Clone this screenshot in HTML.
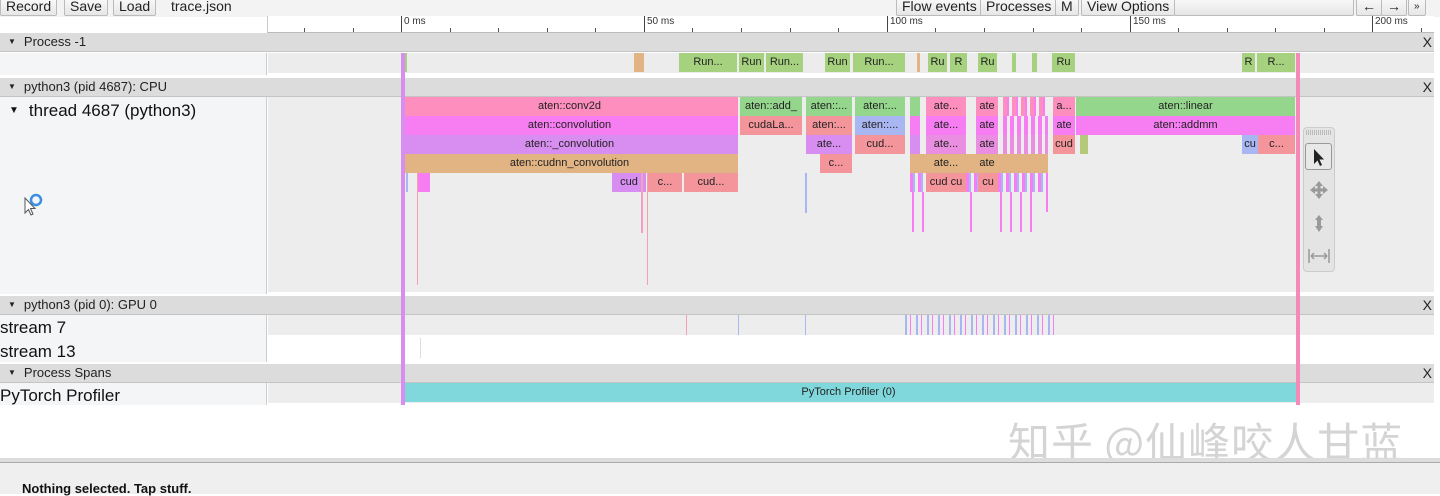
<!DOCTYPE html>
<html><head><meta charset="utf-8"><style>
*{margin:0;padding:0;box-sizing:border-box}
body{width:1440px;height:494px;position:relative;overflow:hidden;background:#fff;font-family:"Liberation Sans","Noto Sans CJK SC",sans-serif}
.a{position:absolute}
.btn{position:absolute;top:-3px;height:19px;border:1px solid #bbb;background:linear-gradient(#fafafa,#e6e6e6);font-size:14px;line-height:17px;padding:0 5px;color:#222;border-radius:2px}
.hd{position:absolute;left:0;width:1434px;height:19px;background:#dcdcdc;border-bottom:1px solid #c4c4c4;font-size:13px;line-height:18px;color:#222;padding-left:8px}
.hd i{font-style:normal;font-size:8px;vertical-align:2px;margin-right:8px}
.hd .x{position:absolute;right:2px;top:0;font-size:14px}
.lp{position:absolute;left:0;width:267px;background:#f4f5f6;border-right:1px solid #ccc}
.b{position:absolute;height:19px;font-size:11px;text-align:center;line-height:19px;overflow:hidden;color:#222;white-space:nowrap}
.v{position:absolute;width:2px}
.tk{position:absolute;top:28px;width:1px;height:4px;background:#555}
.tl{position:absolute;top:16px;height:16px;border-left:1px solid #444;font-size:10px;line-height:12px;padding-left:2px;color:#333}
</style></head><body>
<div class="a" style="left:0;top:0;width:1440px;height:17px;background:#f3f3f3"></div>
<div class="btn" style="left:0">Record</div>
<div class="btn" style="left:64px">Save</div>
<div class="btn" style="left:113px">Load</div>
<div class="a" style="left:171px;top:-2px;font-size:14px;color:#222">trace.json</div>
<div class="btn" style="left:896px">Flow events</div>
<div class="btn" style="left:980px">Processes</div>
<div class="btn" style="left:1055px">M</div>
<div class="btn" style="left:1081px">View Options</div>
<div class="btn" style="left:1174px;width:180px"></div>
<div class="btn" style="left:1356px">←</div>
<div class="btn" style="left:1381px">→</div>
<div class="btn" style="left:1408px;font-size:10px">»</div>
<div class="a" style="left:267px;top:16px;width:1167px;height:17px;background:#fff;border-left:1px solid #ccc;border-bottom:1px solid #bbb"></div>
<div class="tl" style="left:401px">0 ms</div><div class="tl" style="left:644px">50 ms</div><div class="tl" style="left:887px">100 ms</div><div class="tl" style="left:1130px">150 ms</div><div class="tl" style="left:1372px">200 ms</div>
<div class="tk" style="left:304px"></div><div class="tk" style="left:353px"></div><div class="tk" style="left:450px"></div><div class="tk" style="left:498px"></div><div class="tk" style="left:547px"></div><div class="tk" style="left:595px"></div><div class="tk" style="left:692px"></div><div class="tk" style="left:741px"></div><div class="tk" style="left:790px"></div><div class="tk" style="left:838px"></div><div class="tk" style="left:935px"></div><div class="tk" style="left:984px"></div><div class="tk" style="left:1033px"></div><div class="tk" style="left:1081px"></div><div class="tk" style="left:1178px"></div><div class="tk" style="left:1227px"></div><div class="tk" style="left:1275px"></div><div class="tk" style="left:1324px"></div><div class="tk" style="left:1421px"></div>
<div class="hd" style="top:33px"><i>▼</i>Process -1<span class="x">X</span></div>
<div class="lp" style="top:53px;height:22px"></div>
<div class="a" style="left:268px;top:53px;width:1166px;height:20px;background:#ececec"></div>
<div class="b" style="left:403px;top:53px;width:4px;background:#a6d27f"></div>
<div class="b" style="left:634px;top:53px;width:10px;background:#e2b383"></div>
<div class="b" style="left:679px;top:53px;width:58px;background:#a6d27f">Run...</div>
<div class="b" style="left:739px;top:53px;width:25px;background:#a6d27f">Run</div>
<div class="b" style="left:766px;top:53px;width:37px;background:#a6d27f">Run...</div>
<div class="b" style="left:825px;top:53px;width:25px;background:#a6d27f">Run</div>
<div class="b" style="left:853px;top:53px;width:52px;background:#a6d27f">Run...</div>
<div class="b" style="left:917px;top:53px;width:3px;background:#e2b383"></div>
<div class="b" style="left:928px;top:53px;width:19px;background:#a6d27f">Ru</div>
<div class="b" style="left:950px;top:53px;width:17px;background:#a6d27f">R</div>
<div class="b" style="left:978px;top:53px;width:19px;background:#a6d27f">Ru</div>
<div class="b" style="left:1012px;top:53px;width:4px;background:#a6d27f"></div>
<div class="b" style="left:1032px;top:53px;width:5px;background:#a6d27f"></div>
<div class="b" style="left:1052px;top:53px;width:23px;background:#a6d27f">Ru</div>
<div class="b" style="left:1242px;top:53px;width:13px;background:#a6d27f">R</div>
<div class="b" style="left:1257px;top:53px;width:38px;background:#a6d27f">R...</div>
<div class="hd" style="top:78px"><i>▼</i>python3 (pid 4687): CPU<span class="x">X</span></div>
<div class="lp" style="top:97px;height:197px"></div>
<div class="a" style="left:9px;top:101px;font-size:17px;color:#111"><span style="font-size:10px;vertical-align:3px;margin-right:10px">▼</span>thread 4687 (python3)</div>
<svg class="a" style="left:22px;top:192px" width="24" height="24"><circle cx="14" cy="8" r="5" fill="none" stroke="#3a8fe0" stroke-width="2.5"/><path d="M3 6 L3 21 L6.5 17.5 L9 23 L11 22 L8.5 16.5 L13 16.5 Z" fill="#fff" stroke="#555" stroke-width="1"/></svg>
<div class="a" style="left:268px;top:97px;width:1166px;height:195px;background:#ededed"></div>
<div class="b" style="left:401px;top:97px;width:337px;background:#fd8ebd">aten::conv2d</div>
<div class="b" style="left:740px;top:97px;width:62px;background:#95d68d">aten::add_</div>
<div class="b" style="left:806px;top:97px;width:46px;background:#95d68d">aten::...</div>
<div class="b" style="left:855px;top:97px;width:50px;background:#95d68d">aten:...</div>
<div class="b" style="left:910px;top:97px;width:10px;background:#95d68d"></div>
<div class="b" style="left:926px;top:97px;width:40px;background:#fd8ebd">ate...</div>
<div class="b" style="left:976px;top:97px;width:22px;background:#fd8ebd">ate</div>
<div class="b" style="left:1003px;top:97px;width:45px;background:repeating-linear-gradient(90deg,#fd8ebd 0 4px,#f77df2 4px 6px,#ededed 6px 9px)"></div>
<div class="b" style="left:1053px;top:97px;width:22px;background:#fd8ebd">a...</div>
<div class="b" style="left:1076px;top:97px;width:219px;background:#95d68d">aten::linear</div>
<div class="b" style="left:401px;top:116px;width:337px;background:#f77df2">aten::convolution</div>
<div class="b" style="left:740px;top:116px;width:62px;background:#f4959b">cudaLa...</div>
<div class="b" style="left:806px;top:116px;width:46px;background:#f4959b">aten:...</div>
<div class="b" style="left:855px;top:116px;width:50px;background:#a8b6f2">aten::...</div>
<div class="b" style="left:910px;top:116px;width:10px;background:#f77df2"></div>
<div class="b" style="left:926px;top:116px;width:40px;background:#f77df2">ate...</div>
<div class="b" style="left:976px;top:116px;width:22px;background:#f77df2">ate</div>
<div class="b" style="left:1003px;top:116px;width:45px;background:repeating-linear-gradient(90deg,#f77df2 0 4px,#ededed 4px 7px)"></div>
<div class="b" style="left:1053px;top:116px;width:22px;background:#f77df2">ate</div>
<div class="b" style="left:1076px;top:116px;width:219px;background:#f77df2">aten::addmm</div>
<div class="b" style="left:401px;top:135px;width:337px;background:#d88ef0">aten::_convolution</div>
<div class="b" style="left:806px;top:135px;width:46px;background:#d88ef0">ate...</div>
<div class="b" style="left:855px;top:135px;width:50px;background:#f4959b">cud...</div>
<div class="b" style="left:910px;top:135px;width:10px;background:#d88ef0"></div>
<div class="b" style="left:926px;top:135px;width:40px;background:#e98ee0">ate...</div>
<div class="b" style="left:976px;top:135px;width:22px;background:#e98ee0">ate</div>
<div class="b" style="left:1003px;top:135px;width:45px;background:repeating-linear-gradient(90deg,#e98ee0 0 4px,#ededed 4px 7px)"></div>
<div class="b" style="left:1053px;top:135px;width:22px;background:#f4959b">cud</div>
<div class="b" style="left:1080px;top:135px;width:8px;background:#b6c97a"></div>
<div class="b" style="left:1242px;top:135px;width:16px;background:#a8b6f2">cu</div>
<div class="b" style="left:1258px;top:135px;width:37px;background:#f4959b">c...</div>
<div class="b" style="left:401px;top:154px;width:337px;background:#e2b383">aten::cudnn_convolution</div>
<div class="b" style="left:820px;top:154px;width:32px;background:#f4959b">c...</div>
<div class="b" style="left:910px;top:154px;width:138px;background:#e2b383"></div>
<div class="b" style="left:926px;top:154px;width:40px;background:#e2b383">ate...</div>
<div class="b" style="left:976px;top:154px;width:22px;background:#e2b383">ate</div>
<div class="b" style="left:406px;top:173px;width:2px;background:#a8b6f2"></div>
<div class="b" style="left:418px;top:173px;width:12px;background:#f77df2"></div>
<div class="b" style="left:612px;top:173px;width:34px;background:#d88ef0">cud</div>
<div class="b" style="left:648px;top:173px;width:34px;background:#f4959b">c...</div>
<div class="b" style="left:684px;top:173px;width:54px;background:#f4959b">cud...</div>
<div class="b" style="left:910px;top:173px;width:138px;background:repeating-linear-gradient(90deg,#f77df2 0 3px,#a8b6f2 3px 5px,#ededed 5px 8px)"></div>
<div class="b" style="left:926px;top:173px;width:40px;background:#f4959b">cud cu</div>
<div class="b" style="left:978px;top:173px;width:20px;background:#f4959b">cu</div>
<div class="v" style="left:805px;top:173px;height:40px;background:#a8b6f2"></div>
<div class="v" style="left:641px;top:173px;height:60px;background:#f0a0c0"></div>
<div class="v" style="left:647px;top:173px;height:112px;width:1px;background:#f4a0b0"></div>
<div class="v" style="left:417px;top:173px;height:112px;width:1px;background:#f4a0b0"></div>
<div class="v" style="left:912px;top:192px;height:40px;background:#f77df2"></div>
<div class="v" style="left:922px;top:192px;height:40px;background:#f77df2"></div>
<div class="v" style="left:970px;top:192px;height:40px;background:#f77df2"></div>
<div class="v" style="left:1000px;top:192px;height:40px;background:#f77df2"></div>
<div class="v" style="left:1010px;top:192px;height:40px;background:#f77df2"></div>
<div class="v" style="left:1020px;top:192px;height:40px;background:#f77df2"></div>
<div class="v" style="left:1030px;top:192px;height:40px;background:#f77df2"></div>
<div class="v" style="left:1046px;top:192px;height:20px;background:#f77df2"></div>
<div class="a" style="left:1303px;top:127px;width:32px;height:145px;background:#e4e4e4;border:1px solid #ccc;border-radius:4px"></div>
<div class="a" style="left:1306px;top:130px;width:26px;height:5px;background:repeating-linear-gradient(90deg,#bbb 0 1px,transparent 1px 2px)"></div>
<div class="a" style="left:1305px;top:143px;width:27px;height:27px;border:1px solid #999;border-radius:3px;background:#e8e8e8"></div>
<svg class="a" style="left:1305px;top:143px" width="28" height="125"><path d="M9 6 L9 21 L12.5 17.5 L15 23 L17 22 L14.5 16.5 L19 16.5 Z" fill="#222"/><path d="M14 38 L18 43 L15.5 43 L15.5 45.5 L18 45.5 L18 43 L23 47 L18 51 L18 48.5 L15.5 48.5 L15.5 51 L18 51 L14 56 L10 51 L12.5 51 L12.5 48.5 L10 48.5 L10 51 L5 47 L10 43 L10 45.5 L12.5 45.5 L12.5 43 L10 43 Z" fill="#9a9a9a"/><path d="M14 72 L18 77 L16 77 L16 83 L18 83 L14 89 L10 83 L12 83 L12 77 L10 77 Z" fill="#9a9a9a"/><path d="M4 106 L4 120 M24 106 L24 120 M6 113 L22 113 M6 113 L9 110 M6 113 L9 116 M22 113 L19 110 M22 113 L19 116" stroke="#9a9a9a" stroke-width="1.5" fill="none"/></svg>
<div class="hd" style="top:296px"><i>▼</i>python3 (pid 0): GPU 0<span class="x">X</span></div>
<div class="lp" style="top:315px;height:47px"></div>
<div class="a" style="left:0;top:318px;font-size:17px;color:#111">stream 7</div>
<div class="a" style="left:0;top:342px;font-size:17px;color:#111">stream 13</div>
<div class="a" style="left:268px;top:315px;width:1166px;height:20px;background:#ededed"></div>
<div class="v" style="left:686px;top:315px;height:20px;width:1px;background:#f4a0b0"></div>
<div class="v" style="left:738px;top:315px;height:20px;width:1px;background:#a8b6f2"></div>
<div class="v" style="left:805px;top:315px;height:20px;width:1px;background:#a8b6f2"></div>
<div class="a" style="left:905px;top:315px;width:150px;height:20px;background:repeating-linear-gradient(90deg,#a8b6f2 0 2px,#ededed 2px 5px,#f77df2 5px 6px,#ededed 6px 11px)"></div>
<div class="v" style="left:420px;top:338px;height:20px;width:1px;background:#ddd"></div>
<div class="hd" style="top:364px"><i>▼</i>Process Spans<span class="x">X</span></div>
<div class="lp" style="top:383px;height:22px"></div>
<div class="a" style="left:0;top:386px;font-size:17px;color:#111">PyTorch Profiler</div>
<div class="a" style="left:268px;top:383px;width:1166px;height:20px;background:#ededed"></div>
<div class="b" style="left:401px;top:383px;width:895px;background:#80d8dc">PyTorch Profiler (0)</div>
<div class="v" style="left:401px;top:53px;height:352px;width:4px;background:#d88ef0"></div>
<div class="v" style="left:1296px;top:53px;height:352px;width:4px;background:#f58ab8"></div>
<div class="a" style="left:1008px;top:410px;font-size:42px;color:#d4d4d4;letter-spacing:1px;font-family:'Noto Sans CJK SC',sans-serif">知乎 @仙峰咬人甘蓝</div>
<div class="a" style="left:0;top:458px;width:1440px;height:4px;background:#ddd"></div>
<div class="a" style="left:0;top:462px;width:1440px;height:32px;background:#efefef;border-top:1px solid #aaa"></div>
<div class="a" style="left:22px;top:481px;font-size:13px;font-weight:bold;color:#111">Nothing selected. Tap stuff.</div>
</body></html>
